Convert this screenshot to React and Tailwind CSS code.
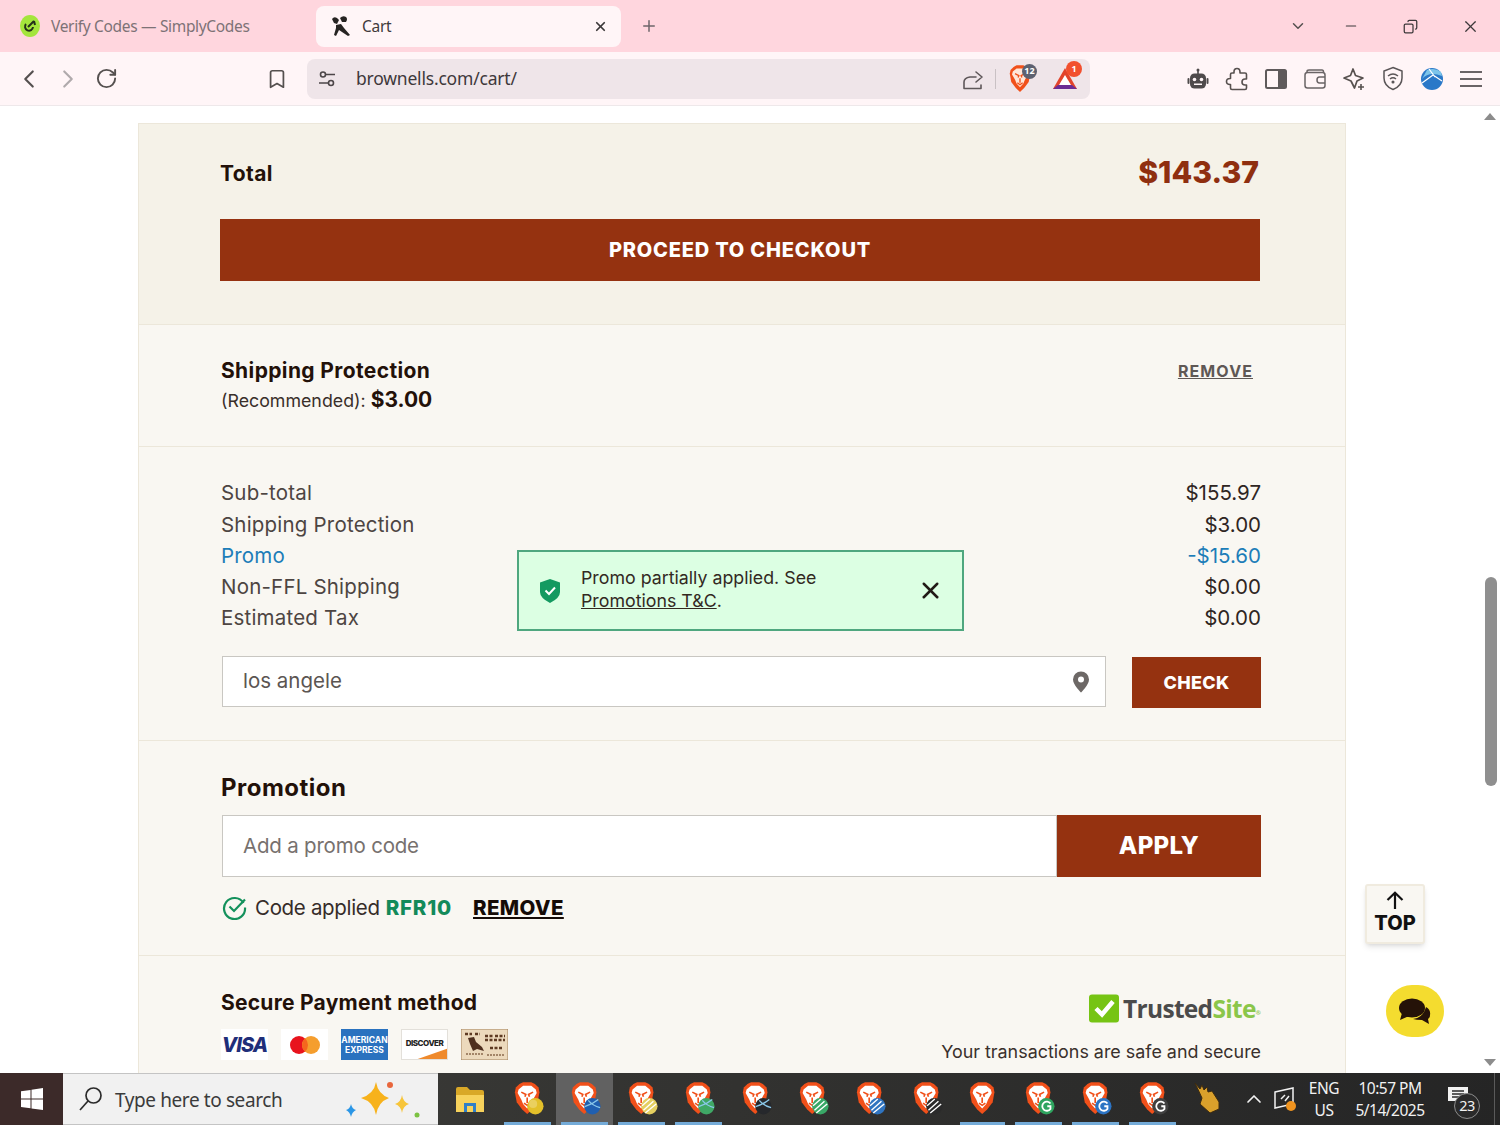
import { Bookmark, ChevronDown, ChevronLeft, ChevronRight, ChevronUp, Copy, Minus, Plus, RotateCw, X } from "lucide-react";

const FONT = "font-['Inter','Liberation_Sans',sans-serif]";
const UI_FONT = "font-['Noto_Sans','Liberation_Sans',sans-serif]";

function BraveIcon({ width = 24, height = 30, face = "#ffffff", children }) {
  return (
    <svg width={width} height={height} viewBox="0 0 33 36">
      <path d="M6 2 L10 0 H19 L23 2 L27 6 L28 11 L26 22 L20 30 L14.500 35 L9 30 L3 22 L1 11 L2 6 Z" fill="#f1501a" />
      <path d="M5 8 L10 4 H19 L24 8 L25 12 L21 19 L19 24 L14.500 29 L10 24 L8 19 L4 12 Z" fill={face} />
      <path d="M8 11 L13 13.500 L12 16 M21 11 L16 13.500 L17 16 M14.500 17 V23 M11 23 L14.500 25.500 L18 23" stroke="#f1501a" strokeWidth="1.800" fill="none" />
      {children}
    </svg>
  );
}

function Badge({ fill, stripe }) {
  return (
    <g>
      <circle cx="23.500" cy="26.500" r="9" fill={fill} />
      {stripe === "ball" && <circle cx="21" cy="24" r="4.500" fill="#ffffff" opacity="0.250" />}
      {stripe === "arc" && <path d="M15 27 Q24 24 30 19 M19 20 Q24 26 32 28" stroke="#8ac8ea" strokeWidth="1.500" fill="none" />}
      {stripe === "lines" && <path d="M17 31 L28 21 M19 34 L31 24 M15.500 26 L24 18.500" stroke="#ffffff" strokeWidth="1.500" />}
      {stripe === "g" && <path d="M28 23.500 A5 5 0 1 0 28 29.500 V26.500 H24.500" stroke="#ffffff" strokeWidth="2" fill="none" />}
    </g>
  );
}

const TASK_ITEMS = [
  { fill: "#e3c02a", stripe: "ball", bar: true },
  { fill: "#1f5fb0", stripe: "arc", bar: true, active: true },
  { fill: "#e4cf60", stripe: "lines", bar: true },
  { fill: "#3fa866", stripe: "arc", bar: true },
  { fill: "#26282c", stripe: "arc" },
  { fill: "#39a867", stripe: "lines" },
  { fill: "#2f74c0", stripe: "lines" },
  { fill: "#2b2b2b", stripe: "lines" },
  { bar: true },
  { fill: "#2ea45f", stripe: "g", bar: true },
  { fill: "#2c74c4", stripe: "g", bar: true },
  { fill: "#404040", stripe: "g", bar: true },
];

function ToolIcon({ children }) {
  return <div className="flex h-10 w-[39px] items-center justify-center text-[#55504f]">{children}</div>;
}

function TabBar() {
  return (
    <div className={`flex h-[52px] shrink-0 items-center bg-[#ffd6de] ${UI_FONT}`}>
      <div className="flex w-[316px] items-center gap-[11px] pl-[20px]">
        <svg width="20" height="22" viewBox="0 0 20 22">
          <ellipse cx="10" cy="11" rx="10" ry="11" fill="#a4e53c" />
          <path d="M14 6 L8 12 M6 9 A4 4 0 1 0 13 12 M14 6 L15 10" stroke="#24301a" strokeWidth="2" fill="none" />
        </svg>
        <span className="mt-[2px] text-[15.500px] tracking-[-0.330px] text-[#7d7276]">Verify Codes — SimplyCodes</span>
      </div>
      <div className="flex h-[41px] w-[305px] items-center rounded-lg bg-[#fff5f7] pl-[15px] pr-[13px]">
        <svg width="20" height="22" viewBox="0 0 20 22" className="shrink-0">
          <path d="M1 4 Q3 1 6 3 L8 5 L6 9 L3 8 Z M9 3 Q12 0 15 2 Q17 4 15 7 L11 7 Z M5 10 L10 9 L13 13 L19 20 L17 21 L11 17 L8 15 L5 21 L3 20 L5 13 Z" fill="#262322" />
        </svg>
        <span className="ml-[11px] mt-[2px] flex-1 text-[15.500px] tracking-[-0.300px] text-[#3f3a3c]">Cart</span>
        <X size={15} strokeWidth={2.800} className="text-[#3c3839]" />
      </div>
      <Plus size={18} strokeWidth={2} className="ml-[19px] text-[#6e666a]" />
      <div className="ml-auto flex items-center text-[#3d383a]">
        <ChevronDown size={18} strokeWidth={2} className="mr-[36px] text-[#55504f]" />
        <Minus size={16} strokeWidth={1.700} className="mr-[44px]" />
        <Copy size={15} strokeWidth={2} className="mr-[43px] -scale-x-100" />
        <X size={19} strokeWidth={1.500} className="mr-[20px]" />
      </div>
    </div>
  );
}

function Toolbar() {
  return (
    <div className={`flex h-[54px] shrink-0 items-center border-b border-[#eee8ea] bg-[#fff5f7] pl-[9px] ${UI_FONT}`}>
      <ToolIcon><ChevronLeft size={30} strokeWidth={1.700} /></ToolIcon>
      <ToolIcon><ChevronRight size={30} strokeWidth={1.700} className="text-[#b0aaac]" /></ToolIcon>
      <ToolIcon><RotateCw size={23} strokeWidth={2} /></ToolIcon>
      <div className="ml-[131px] mr-[11px]">
        <ToolIcon><Bookmark size={22} strokeWidth={1.900} /></ToolIcon>
      </div>
      <div className="flex h-10 w-[783px] items-center rounded-lg bg-[#efe5e9] pl-[11px] pr-[6px]">
        <svg width="18" height="18" viewBox="0 0 18 18" fill="none" stroke="#4c4648" strokeWidth="1.600">
          <circle cx="5" cy="4.500" r="2.500" />
          <path d="M8 4.500 H17 M1 13 H10" />
          <circle cx="13" cy="13" r="2.500" />
        </svg>
        <span className="ml-[20px] mt-[-1px] flex-1 text-[17.500px] tracking-[-0.200px] text-[#3e383b]">brownells.com/cart/</span>
        <svg width="22" height="22" viewBox="0 0 22 22" fill="none" stroke="#5e5759" strokeWidth="1.600" strokeLinejoin="round" strokeLinecap="round">
          <path d="M2 20 V14 Q2 10 8 9 H14 M14 4 L20 9 L14 14 M2 20.500 H19 V17" />
        </svg>
        <div className="ml-[11px] h-5 w-px bg-[#c9c1c4]" />
        <div className="relative ml-[13px] h-7 w-[34px]">
          <BraveIcon width={25} height={28} face="#ffe6d8" />
          <span className="absolute right-[6px] top-[-1px] flex h-[15px] w-[15px] items-center justify-center rounded-full bg-[#5d6170] text-[9px] font-bold text-white">12</span>
        </div>
        <div className="relative ml-[9px] h-7 w-[32px]">
          <svg width="26" height="24" viewBox="0 0 26 24" className="mt-[2px]">
            <path d="M13 1 L25 22 H1 Z" fill="#e2442b" />
            <path d="M1 22 L6 18 H20 L25 22 Z" fill="#6b2c94" />
            <path d="M13 8 L19 18 H7 Z" fill="#ffffff" />
          </svg>
          <span className="absolute right-[2px] top-[-4px] flex h-[16px] w-[16px] items-center justify-center rounded-full bg-[#f2502e] text-[9px] font-bold text-white">1</span>
        </div>
      </div>
      <div className="ml-[88.500px] flex items-center">
        <ToolIcon>
          <svg width="22" height="22" viewBox="0 0 22 22" fill="#4f4a4b">
            <circle cx="11" cy="2" r="1.500" />
            <rect x="10.200" y="2" width="1.600" height="4" />
            <rect x="3" y="5.500" width="16" height="15" rx="4.500" />
            <rect x="0.500" y="10" width="2" height="6" rx="1" />
            <rect x="19.500" y="10" width="2" height="6" rx="1" />
            <circle cx="7.500" cy="11.500" r="1.800" fill="#fff5f7" />
            <circle cx="14.500" cy="11.500" r="1.800" fill="#fff5f7" />
            <rect x="7" y="15.500" width="8" height="1.500" fill="#fff5f7" />
          </svg>
        </ToolIcon>
        <ToolIcon>
          <svg width="24" height="24" viewBox="0 0 24 24" fill="none" stroke="#57514f" strokeWidth="1.600" strokeLinejoin="round">
            <path d="M9 5 Q9 1.500 12 1.500 Q15 1.500 15 5 L15 6 H20 Q21.500 6 21.500 7.500 V12 H20 Q17 12 17 15 Q17 18 20 18 H21.500 V21 Q21.500 22.500 20 22.500 H7 Q5.500 22.500 5.500 21 V17.500 H5 Q1.500 17.500 1.500 14.500 Q1.500 11.500 5 11.500 H5.500 V7.500 Q5.500 6 7 6 H9 Z" />
          </svg>
        </ToolIcon>
        <ToolIcon>
          <svg width="22" height="20" viewBox="0 0 22 20">
            <rect x="1" y="1" width="20" height="18" rx="1.500" fill="none" stroke="#5f5a5b" strokeWidth="2" />
            <rect x="13" y="1" width="8" height="18" fill="#5f5a5b" />
          </svg>
        </ToolIcon>
        <ToolIcon>
          <svg width="22" height="20" viewBox="0 0 22 20" fill="none" stroke="#6a6466" strokeWidth="1.500">
            <rect x="1" y="3.500" width="20" height="15.500" rx="2.500" />
            <path d="M3 3.500 V2.500 Q3 1 5 1 H18 Q19.500 1 19.500 3" />
            <path d="M21 8 H15.500 Q13 8 13 11 Q13 14 15.500 14 H21" />
          </svg>
        </ToolIcon>
        <ToolIcon>
          <svg width="24" height="24" viewBox="0 0 24 24" fill="none" stroke="#57514f" strokeWidth="1.700" strokeLinejoin="round">
            <path d="M11 2 L13.500 8.500 L21 11 L15 14 L12.500 21 L9 14 L2 11 L8.500 8.500 Z" />
            <path d="M19 17 V23 M16 20 H22" strokeWidth="1.600" />
          </svg>
        </ToolIcon>
        <ToolIcon>
          <svg width="22" height="25" viewBox="0 0 22 25" fill="none" stroke="#5a5557" strokeWidth="1.500">
            <path d="M11 1.500 L20 5 V12 Q20 20 11 23.500 Q2 20 2 12 V5 Z" />
            <path d="M6 10 Q11 6 16 10 M8 13 Q11 10.500 14 13" />
            <circle cx="11" cy="16" r="0.800" fill="#5a5557" />
          </svg>
        </ToolIcon>
        <ToolIcon>
          <svg width="22" height="22" viewBox="0 0 22 22">
            <circle cx="11" cy="11" r="11" fill="#2a78c8" />
            <path d="M1 11 Q8 3 21 8 L20 4 Q14 -1 6 2 Z" fill="#7cc4ea" />
            <path d="M1 15 L12 7 L21 13 M8 1 L14 9" stroke="#ffffff" strokeWidth="1.200" fill="none" />
          </svg>
        </ToolIcon>
        <ToolIcon>
          <svg width="22" height="18" viewBox="0 0 22 18" stroke="#6a6466" strokeWidth="1.800">
            <path d="M0 2 H22 M0 9 H22 M0 16 H22" />
          </svg>
        </ToolIcon>
      </div>
    </div>
  );
}

function SummaryRow({ label, value, blue }) {
  return (
    <div className={`flex h-[31.250px] items-center justify-between text-[20.500px] ${blue ? "text-[#1c7db8]" : "text-[#4d4542]"}`}>
      <span className="tracking-[0.200px]">{label}</span>
      <span className={blue ? "" : "text-[#2e2522]"}>{value}</span>
    </div>
  );
}

function PaymentCards() {
  return (
    <div className="mt-[12px] flex items-center gap-[13px]">
      <div className="flex h-[31px] w-[47px] items-center justify-center bg-white text-[20px] font-extrabold italic tracking-[-1px] text-[#1f2e79]">VISA</div>
      <div className="flex h-[31px] w-[47px] items-center justify-center bg-white">
        <svg width="30" height="18" viewBox="0 0 30 18">
          <circle cx="9" cy="9" r="9" fill="#e8131d" />
          <circle cx="21" cy="9" r="9" fill="#f59e2e" />
          <path d="M15 2.300 A9 9 0 0 1 15 15.700 A9 9 0 0 1 15 2.300 Z" fill="#f5661e" />
        </svg>
      </div>
      <div className="flex h-[31px] w-[47px] flex-col items-center justify-center bg-[#2a72bf] text-[8.500px] font-bold leading-[10px] text-white">
        <span>AMERICAN</span>
        <span>EXPRESS</span>
      </div>
      <div className="relative flex h-[31px] w-[47px] items-center justify-center overflow-hidden border border-[#e3e0da] bg-white text-[8px] font-extrabold tracking-[-0.500px] text-[#222]">
        <svg viewBox="0 0 47 31" className="absolute inset-0" width="47" height="31">
          <path d="M10 31 L47 18 V31 Z" fill="#ef8a2c" />
        </svg>
        <span className="relative -mt-[4px]">DISCOVER</span>
      </div>
      <svg width="47" height="31" viewBox="0 0 47 31">
        <rect width="47" height="31" fill="#ecd9bc" stroke="#a3835f" />
        <path d="M4 5 H11 M14 5 H19 M24 7 H32 M34 7 H44 M24 11 H44 M29 19 H41" stroke="#5e3a22" strokeWidth="2.500" strokeDasharray="3 1.500" />
        <path d="M5 25 H22 M26 26 H44" stroke="#8a6a4c" strokeWidth="1.500" strokeDasharray="2 1" />
        <path d="M7 9 L13 8 L15 13 L21 18 L23 22 L16 20 L12 22 L9 15 Z" fill="#4f2f1e" />
      </svg>
    </div>
  );
}

function Card() {
  return (
    <div className={`ml-[138px] mt-[17px] w-[1208px] border-x border-t border-[#ece7da] bg-[#f9f7f2] ${FONT}`}>
      <section className="h-[201px] border-b border-[#ece7da] bg-[#f5f2e8] pl-[81px] pr-[85px] pt-[33px]">
        <div className="flex h-[32px] items-center justify-between">
          <span className="mt-[1px] text-[21px] font-bold tracking-[0.400px] text-[#231109]">Total</span>
          <span className="mr-[1px] text-[30.200px] font-extrabold text-[#8f2f0f]">$143.37</span>
        </div>
        <button className="mt-[30px] flex h-[62px] w-full items-center justify-center bg-[#953210] text-[20px] font-extrabold tracking-[0.800px] text-white">PROCEED TO CHECKOUT</button>
      </section>

      <section className="flex h-[122px] justify-between border-b border-[#ece7da] pl-[82px] pr-[92px] pt-[32px]">
        <div>
          <p className="text-[21px] font-bold leading-[28px] tracking-[0.370px] text-[#231109]">Shipping Protection</p>
          <p className="text-[17.800px] leading-[30px] text-[#3a2f2a]">(Recommended): <span className="text-[21px] font-bold text-[#231109]">$3.00</span></p>
        </div>
        <a className="mt-[2px] h-[24px] text-[16px] font-bold tracking-[1.100px] text-[#5f5855] underline">REMOVE</a>
      </section>

      <section className="relative h-[294px] border-b border-[#ece7da] pl-[82px] pr-[84px] pt-[31px]">
        <SummaryRow label="Sub-total" value="$155.97" />
        <SummaryRow label="Shipping Protection" value="$3.00" />
        <SummaryRow label="Promo" value="-$15.60" blue />
        <SummaryRow label="Non-FFL Shipping" value="$0.00" />
        <SummaryRow label="Estimated Tax" value="$0.00" />
        <div className="mt-[22px] flex items-start justify-between pl-[1px]">
          <div className="flex h-[51px] w-[884px] items-center justify-between border border-[#c9c7c2] bg-white pl-[20px] pr-[15px] text-[20.500px] text-[#5b5552]">
            <span>los angele</span>
            <svg width="18" height="22" viewBox="0 0 18 22">
              <path fillRule="evenodd" d="M9 0.500 A8 8 0 0 1 17 8.500 C17 14 9 21.500 9 21.500 C9 21.500 1 14 1 8.500 A8 8 0 0 1 9 0.500 Z M9 5.500 A3 3 0 1 0 9 11.500 A3 3 0 1 0 9 5.500 Z" fill="#6d6866" />
            </svg>
          </div>
          <button className="mt-[1px] flex h-[51px] w-[129px] items-center justify-center bg-[#953210] text-[18px] font-extrabold tracking-[0.300px] text-white">CHECK</button>
        </div>
        <div className="absolute left-[378px] top-[103px] flex h-[81px] w-[447px] items-center border-2 border-[#4fa77f] bg-[#dcffe3] pl-[20px] pr-[18px]">
          <svg width="22" height="26" viewBox="0 0 22 26" className="shrink-0">
            <path d="M11 1 L21 4.500 V14 Q21 20 11 25 Q1 20 1 14 V4.500 Z" fill="#149a61" />
            <path d="M6.500 12.500 L10 16 L16 9.500" stroke="#ffffff" strokeWidth="2" fill="none" />
          </svg>
          <p className="ml-[20px] mt-[-3px] flex-1 text-[17.800px] leading-[23px] text-[#33291f]">
            Promo partially applied. See<br />
            <span className="underline">Promotions T&amp;C</span>.
          </p>
          <X size={27} strokeWidth={2.200} className="text-[#211a16]" />
        </div>
      </section>

      <section className="h-[215px] border-b border-[#ece7da] pl-[83px] pr-[84px] pt-[31px]">
        <h2 className="-ml-[1px] text-[24px] font-bold leading-[32px] tracking-[0.500px] text-[#231109]">Promotion</h2>
        <div className="mt-[11px] flex h-[62px]">
          <div className="flex flex-1 items-center border border-[#c9c7c2] bg-white pl-[20px] text-[20.500px] tracking-[-0.200px] text-[#77716e]">Add a promo code</div>
          <button className="flex w-[204px] items-center justify-center bg-[#953210] text-[24px] font-extrabold tracking-[0.300px] text-white">APPLY</button>
        </div>
        <div className="mt-[15.500px] flex items-center text-[20.500px] text-[#362c29]">
          <svg width="25" height="25" viewBox="0 0 25 25" fill="none" stroke="#14915c" strokeWidth="2.200" className="mr-[8px]">
            <path d="M21.500 8 A10.500 10.500 0 1 0 23 12.500" />
            <path d="M7.500 11.500 L12 16 L23 4.500" />
          </svg>
          <span className="tracking-[-0.330px]">Code applied</span>
          <span className="ml-[6px] font-extrabold tracking-[0.800px] text-[#138a5a]">RFR10</span>
          <a className="ml-[21px] font-extrabold tracking-[0.350px] text-[#150b07] underline">REMOVE</a>
        </div>
      </section>

      <section className="flex h-[130px] justify-between pl-[82px] pr-[84px] pt-[33px]">
        <div>
          <h3 className="text-[21px] font-bold leading-[28px] tracking-[0.250px] text-[#231109]">Secure Payment method</h3>
          <PaymentCards />
        </div>
        <div className="flex flex-col items-end">
          <div className="mt-[5px] flex items-center">
            <svg width="30" height="29" viewBox="0 0 30 28">
              <rect width="30" height="28" rx="3" fill="#76c414" />
              <path d="M7 14 L13 20 L24 7" stroke="#ffffff" strokeWidth="4.500" fill="none" />
            </svg>
            <span className="ml-[4px] mr-[1px] font-['Open_Sans',sans-serif] text-[24.500px] font-bold leading-[28px] tracking-[-0.700px] text-[#4b4b4b]">Trusted<span className="text-[#8ac64a]">Site</span><sup className="text-[6px] text-[#8ac64a]">®</sup></span>
          </div>
          <p className="mt-[16px] text-[17.900px] text-[#3a302c]">Your transactions are safe and secure</p>
        </div>
      </section>
    </div>
  );
}

function Scrollbar() {
  return (
    <div className="flex w-[17px] shrink-0 flex-col items-center justify-between bg-white py-[7px] pr-[3px]">
      <div className="h-0 w-0 border-x-[6px] border-b-[7px] border-x-transparent border-b-[#8c8c8c]" />
      <div className="absolute right-[3px] top-[471px] h-[209px] w-[12px] rounded-md bg-[#8f8f8f]" />
      <div className="h-0 w-0 border-x-[6px] border-t-[7px] border-x-transparent border-t-[#8c8c8c]" />
    </div>
  );
}

function Taskbar() {
  return (
    <div className={`relative flex h-[52px] shrink-0 items-stretch bg-gradient-to-r from-[#3f3f3b] to-[#252525] ${UI_FONT}`}>
      <div className="flex w-[63px] items-center justify-center bg-[#3c2a29]">
        <svg width="22" height="22" viewBox="0 0 22 22" fill="#ffffff">
          <path d="M0 3.200 L9.500 1.900 V10.500 H0 Z M10.500 1.700 L22 0 V10.500 H10.500 Z M0 11.500 H9.500 V20.200 L0 18.900 Z M10.500 11.500 H22 V22 L10.500 20.400 Z" />
        </svg>
      </div>
      <div className="flex w-[375px] items-center border-y border-[#c4c4c4] bg-[#f1f1f1] pl-[15px]">
        <svg width="25" height="26" viewBox="0 0 25 26" fill="none" stroke="#2b2b2b" strokeWidth="1.700">
          <circle cx="15.500" cy="9.500" r="7.500" />
          <path d="M10 15 L2 24" />
        </svg>
        <span className="ml-[12px] mt-[2px] flex-1 text-[19px] tracking-[-0.400px] text-[#3b3b3b]">Type here to search</span>
        <svg width="82" height="44" viewBox="0 0 82 44" className="mr-[15px]">
          <path d="M35 5 Q37 17 48 21 Q37 25 35 38 Q33 25 20 21 Q33 17 35 5 Z" fill="#f7b21c" />
          <path d="M61 18 Q62 25 68 27 Q62 29 61 36 Q60 29 54 27 Q60 25 61 18 Z" fill="#f7c53a" />
          <path d="M10 27 Q11 32 15 33 Q11 35 10 40 Q9 35 5 33 Q9 32 10 27 Z" fill="#2a96e6" />
          <circle cx="49" cy="8" r="3" fill="#e8663c" />
          <circle cx="76" cy="38" r="2.500" fill="#7cc242" />
        </svg>
      </div>
      <div className="flex w-[61px] items-center justify-center pl-[2px]">
        <svg width="30" height="26" viewBox="0 0 30 26">
          <path d="M1 3 Q1 1 3 1 H12 L15 4 H27 Q29 4 29 6 V10 H1 Z" fill="#d9a827" />
          <rect x="1" y="9" width="28" height="17" fill="#f7d25c" />
          <rect x="9" y="17" width="12" height="9" fill="#2f7fc8" />
          <rect x="12" y="20" width="6" height="6" fill="#f7d25c" />
        </svg>
      </div>
      {TASK_ITEMS.map((item, i) => (
        <div key={i} className={`relative flex ${i === 8 ? "w-[55px]" : "w-[57px]"} items-center justify-center pb-[2px] pl-[2px] ${item.active ? "bg-[#616161]" : ""}`}>
          <BraveIcon width={30} height={33}>{item.fill && <Badge fill={item.fill} stripe={item.stripe} />}</BraveIcon>
          {item.bar && <div className="absolute inset-x-[5px] bottom-0 h-[3px] bg-[#74abd8]" />}
        </div>
      ))}
      <div className="flex w-[52px] items-center justify-center">
        <svg width="30" height="34" viewBox="0 0 30 34">
          <path d="M3 1 L8 7 L10 3 L12 8 L15 5 L16 10 L20 9 L27 20 L27 27 L18 31 L8 22 L10 16 Z" fill="#d9a02b" stroke="#3b2a10" />
        </svg>
      </div>
      <div className="flex flex-1 items-center text-[#f2f2f2]">
        <ChevronUp size={24} strokeWidth={1.700} className="ml-[9px]" />
        <svg width="24" height="26" viewBox="0 0 24 26" className="ml-[7px]">
          <path d="M2 6 L20 2 V18 L2 22 Z" fill="none" stroke="#f2f2f2" strokeWidth="1.500" />
          <path d="M8 13 L12 9 M12 15 L16 10" stroke="#f2f2f2" strokeWidth="1.500" />
          <circle cx="18" cy="20" r="5" fill="#f0941f" />
        </svg>
        <div className="ml-[10px] flex w-[34px] flex-col items-center text-[15.500px] leading-[22.500px] tracking-[-0.400px]">
          <span>ENG</span>
          <span>US</span>
        </div>
        <div className="ml-[4px] flex w-[90px] flex-col items-center text-[15.500px] leading-[22.500px] tracking-[-0.500px]">
          <span>10:57 PM</span>
          <span>5/14/2025</span>
        </div>
        <div className="relative ml-[12px] -mt-[6px]">
          <svg width="22" height="20" viewBox="0 0 22 20" fill="#f2f2f2">
            <path d="M1 1 H21 V15 H1 Z" />
            <path d="M5 5 H17 M5 8 H17 M5 11 H13" stroke="#2a2a2a" strokeWidth="1.500" />
          </svg>
          <span className="absolute left-[7px] top-[7px] flex h-[26px] w-[26px] items-center justify-center rounded-full border border-[#8c8c8c] bg-[#2a2a2a] text-[14.500px] tracking-[-0.500px]">23</span>
        </div>
        <div className="ml-auto mr-[5px] h-full w-px bg-[#5a5a5a]" />
      </div>
    </div>
  );
}

export default function App() {
  return (
    <div className="flex h-[1125px] w-[1500px] flex-col overflow-hidden bg-white">
      <TabBar />
      <Toolbar />
      <main className="relative flex flex-1 overflow-hidden bg-white">
        <div className="flex-1 overflow-hidden">
          <Card />
        </div>
        <Scrollbar />
        <div className={`absolute left-[1365px] top-[778px] flex h-[60px] w-[60px] flex-col items-center rounded-[3px] border-2 border-[#f0ebdf] bg-[#f9f7f2] pt-[5px] shadow-md ${FONT}`}>
          <svg width="20" height="19" viewBox="0 0 20 19" fill="none" stroke="#111111" strokeWidth="2.200">
            <path d="M10 18 V2 M2.500 9 L10 1.800 L17.500 9" />
          </svg>
          <span className="mt-[1px] text-[20px] font-extrabold leading-[24px] text-[#111111]">TOP</span>
        </div>
        <div className="absolute left-[1386px] top-[879px] flex h-[52px] w-[58px] items-center justify-center rounded-full bg-[#f4dc2f]">
          <svg width="32" height="26" viewBox="0 0 32 26" fill="#251208">
            <ellipse cx="13" cy="10" rx="13" ry="9.500" />
            <path d="M3 15 L1 22 L10 18 Z" />
            <path d="M27 9 Q32 12 31 17 Q31 20 29 21 L30 26 L23 22 Q17 22 14 21 Q24 20 27 9 Z" />
          </svg>
        </div>
      </main>
      <Taskbar />
    </div>
  );
}
